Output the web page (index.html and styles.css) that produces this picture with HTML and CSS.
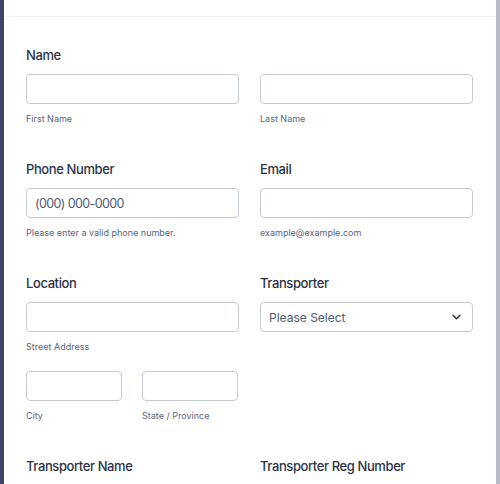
FILE: index.html
```html
<!DOCTYPE html>
<html>
<head>
<meta charset="utf-8">
<link rel="stylesheet" href="styles.css">
</head>
<body>
<div class="frame">
  <div class="topbar"></div>
  <div class="form">
    <div class="section">
      <div class="label">Name</div>
      <div class="row">
        <div class="field"><div class="input"></div><div class="sub">First Name</div></div>
        <div class="field"><div class="input"></div><div class="sub">Last Name</div></div>
      </div>
    </div>
    <div class="row">
      <div class="section">
        <div class="label">Phone Number</div>
        <div class="input"><span class="ph num">(000) 000-0000</span></div>
        <div class="sub">Please enter a valid phone number.</div>
      </div>
      <div class="section">
        <div class="label">Email</div>
        <div class="input"></div>
        <div class="sub">example@example.com</div>
      </div>
    </div>
    <div class="row">
      <div class="section">
        <div class="label">Location</div>
        <div class="input"></div>
        <div class="sub">Street Address</div>
        <div class="row small">
          <div class="field"><div class="input"></div><div class="sub">City</div></div>
          <div class="field"><div class="input"></div><div class="sub">State / Province</div></div>
        </div>
      </div>
      <div class="section">
        <div class="label">Transporter</div>
        <div class="input select"><span class="ph">Please Select</span>
          <svg class="chev" width="9" height="6" viewBox="0 0 9 6"><path d="M1 1.2l3.5 3.5 3.5-3.5" fill="none" stroke="#2c3345" stroke-width="1.5" stroke-linecap="round" stroke-linejoin="round"/></svg>
        </div>
      </div>
    </div>
    <div class="row">
      <div class="section"><div class="label">Transporter Name</div></div>
      <div class="section"><div class="label">Transporter Reg Number</div></div>
    </div>
  </div>
</div>
</body>
</html>
```

FILE: styles.css
```css
html, body {
  margin: 0;
  padding: 0;
  background: #ffffff;
}
body {
  font-family: Inter, "Noto Sans", sans-serif;
  color: #2c3345;
  height: 484px;
  overflow: hidden;
}
.frame {
  border-left: 4px solid #3e4466;
  border-right: 4px solid #b7bac6;
  height: 484px;
  box-sizing: border-box;
}
.topbar {
  height: 16px;
  border-bottom: 1px solid #eef0f4;
}
.form {
  padding: 28px 23px 0 22px;
  display: flex;
  flex-direction: column;
  gap: 33px;
}
.row {
  display: grid;
  grid-template-columns: 1fr 1fr;
  column-gap: 21px;
}
.row.small {
  grid-template-columns: 96px 96px;
  column-gap: 20px;
  margin-top: 17px;
}
.label {
  font-size: 13px;
  font-weight: 500;
  letter-spacing: -0.4px;
  line-height: 20px;
  margin-bottom: 9px;
  color: #2c3345;
}
.input {
  height: 30px;
  box-sizing: border-box;
  border: 1px solid #c5cad6;
  border-radius: 4px;
  background: #fff;
  display: flex;
  align-items: center;
  padding: 0 8px;
}
.ph {
  font-size: 12px;
  color: #4f5a70;
}
.ph.num {
  font-size: 12.5px;
  letter-spacing: -0.6px;
}
.select {
  justify-content: space-between;
}
.chev {
  margin-right: 3px;
}
.sub {
  font-size: 9px;
  line-height: 14px;
  margin-top: 8px;
  color: #57647e;
}
```
